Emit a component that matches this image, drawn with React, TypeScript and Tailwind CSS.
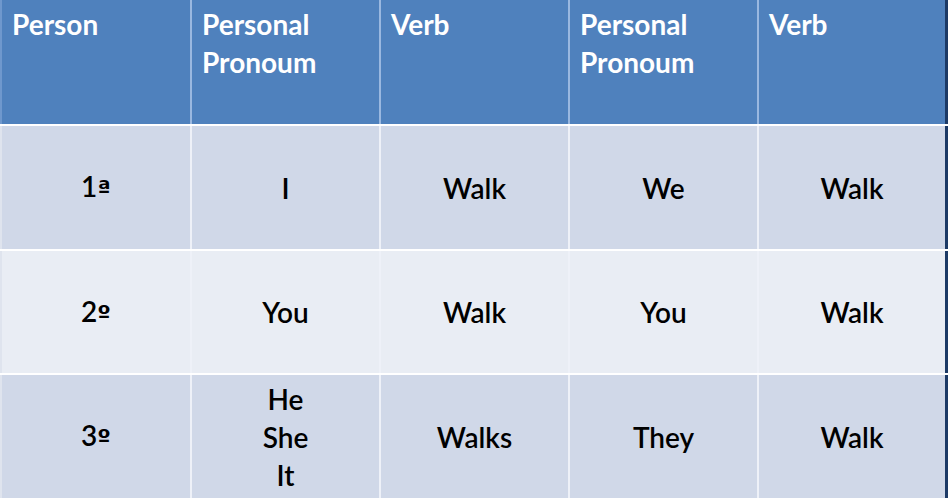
import React from 'react';

const headers = ['Person', 'Personal Pronoum', 'Verb', 'Personal Pronoum', 'Verb'];

const rows: { cells: string[][]; bg: string; h: string }[] = [
  { cells: [['1', 'ª'], ['I'], ['Walk'], ['We'], ['Walk']], bg: 'bg-[#d0d8e8]', h: 'h-[123px]' },
  { cells: [['2', 'º'], ['You'], ['Walk'], ['You'], ['Walk']], bg: 'bg-[#e9edf4]', h: 'h-[122px]' },
  { cells: [['3', 'º'], ['He', 'She', 'It'], ['Walks'], ['They'], ['Walk']], bg: 'bg-[#d0d8e8]', h: 'h-[123px]' },
];

export default function App() {
  return (
    <div className="w-[948px] h-[498px] bg-white flex flex-col gap-y-[2px] overflow-hidden font-['Lato','Liberation_Sans',sans-serif]">
      {/* header */}
      <div className="h-[124px] grid grid-cols-[190px_187px_187px_187px_186px] gap-x-[2px] bg-[#9ab8e0] border-r-[3px] border-[#1c3a66]">
        {headers.map((t, i) => (
          <div
            key={i}
            className={`bg-[#4f81bd] text-white font-bold text-[28px] leading-[38px] pt-[5px] pl-[10px] pr-2 ${i === 0 ? 'border-l-[2px] border-[#6f98cd]' : ''}`}
          >
            {t}
          </div>
        ))}
      </div>

      {rows.map((r, ri) => (
        <div
          key={ri}
          className={`${r.h} grid grid-cols-[190px_187px_187px_187px_186px] gap-x-[2px] bg-[#eef1f8] border-r-[3px] border-[#1c3a66]`}
        >
          {r.cells.map((lines, ci) => (
            <div
              key={ci}
              className={`${r.bg} flex flex-col items-center justify-center text-black font-semibold text-[28px] leading-[38px] ${ci === 0 ? 'border-l-[2px] border-[#dfe4ee]' : ''}`}
            >
              {ci === 0 ? (
                <span>
                  {lines[0]}
                  <span className="font-['DejaVu_Sans',sans-serif] font-bold text-[24px]">{lines[1]}</span>
                </span>
              ) : (
                lines.map((l, li) => <span key={li}>{l}</span>)
              )}
            </div>
          ))}
        </div>
      ))}
    </div>
  );
}
